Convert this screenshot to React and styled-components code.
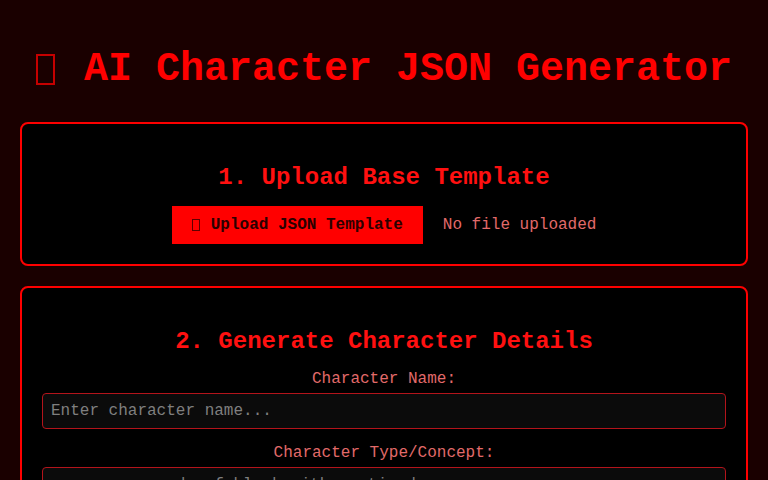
import React from 'react';
import styled, { createGlobalStyle } from 'styled-components';

const GlobalStyle = createGlobalStyle`
  html, body {
    margin: 0;
    padding: 0;
    background: #1a0000;
  }
  body {
    font-family: "Liberation Mono", "Courier New", monospace;
    color: #ff0000;
  }
  * {
    box-sizing: border-box;
  }
`;

const App = () => {
  return (
    <Page>
      <GlobalStyle />
      <Title>
        <Tofu /> AI Character JSON Generator
      </Title>

      <Panel>
        <SectionTitle>1. Upload Base Template</SectionTitle>
        <UploadRow>
          <UploadButton>
            <Tofu /> Upload JSON Template
          </UploadButton>
          <FileStatus>No file uploaded</FileStatus>
        </UploadRow>
      </Panel>

      <Panel>
        <SectionTitle>2. Generate Character Details</SectionTitle>
        <Field>
          <Label>Character Name:</Label>
          <Input placeholder="Enter character name..." />
        </Field>
        <Field>
          <Label>Character Type/Concept:</Label>
          <Input placeholder="e.g., grumpy dwarf blacksmith, retired spy..." />
        </Field>
      </Panel>
    </Page>
  );
};

export default App;

const Page = styled.div`
  padding: 20px;
  min-height: 100vh;
`;

// missing-glyph box, as the emoji shows up in the screenshot
const Tofu = styled.span`
  display: inline-block;
  width: 0.6em;
  height: 0.68em;
  vertical-align: -0.03em;
  position: relative;

  &::before {
    content: '';
    position: absolute;
    left: 0;
    top: 0;
    width: 0.38em;
    height: 0.68em;
    border: 0.05em solid currentColor;
    opacity: 0.75;
  }
`;

const Title = styled.h1`
  margin: 27px 0 30px;
  text-align: center;
  font-size: 40px;
  font-weight: bold;
  color: #ff0000;
`;

const Panel = styled.section`
  background: #000;
  border: 2px solid #ff0000;
  border-radius: 8px;
  padding: 20px;
  margin-bottom: 20px;
`;

const SectionTitle = styled.h2`
  margin: 20px 0 15px;
  text-align: center;
  font-size: 24px;
  font-weight: bold;
  color: #ff1010;
`;

const UploadRow = styled.div`
  display: flex;
  justify-content: center;
  align-items: center;
  gap: 20px;
`;

const UploadButton = styled.button`
  font-family: inherit;
  font-size: 16px;
  font-weight: bold;
  color: #2a0000;
  background: #ff0000;
  border: none;
  border-radius: 0;
  padding: 10px 20px;
  cursor: pointer;
`;

const FileStatus = styled.span`
  font-size: 16px;
  color: #e26a6a;
`;

const Field = styled.div`
  margin-bottom: 15px;
  text-align: center;
`;

const Label = styled.label`
  display: block;
  margin-bottom: 5px;
  font-size: 16px;
  color: #e26a6a;
`;

const Input = styled.input`
  display: block;
  width: 100%;
  font-family: inherit;
  font-size: 16px;
  padding: 8px;
  background: #0b0b0b;
  color: #ff4d4d;
  border: 1px solid #b3141b;
  border-radius: 4px;
  outline: none;

  &::placeholder {
    color: #7f7f7f;
  }
`;
